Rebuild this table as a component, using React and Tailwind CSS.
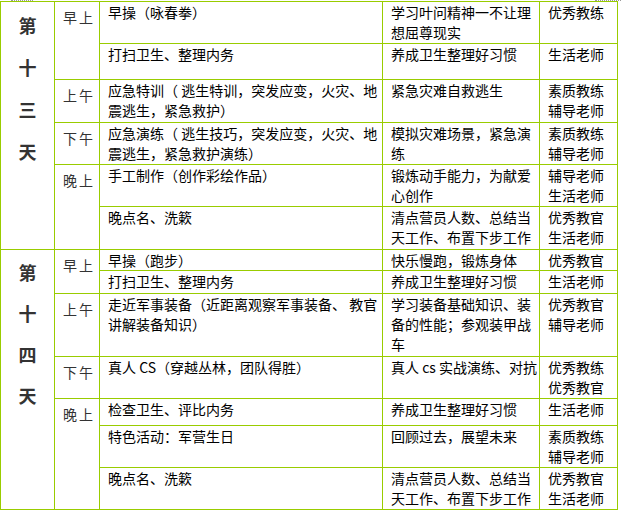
import React from 'react';

const day13 = [
  { c: ['早操（咏春拳）'], g: ['学习叶问精神一不让理', '想屈尊现实'], t: ['优秀教练'] },
  { c: ['打扫卫生、整理内务'], g: ['养成卫生整理好习惯'], t: ['生活老师'] },
  { c: ['应急特训（ 逃生特训，突发应变，火灾、地', '震逃生，紧急救护）'], g: ['紧急灾难自救逃生'], t: ['素质教练', '辅导老师'] },
  { c: ['应急演练（ 逃生技巧，突发应变，火灾、地', '震逃生，紧急救护演练）'], g: ['模拟灾难场景，紧急演', '练'], t: ['素质教练', '辅导老师'] },
  { c: ['手工制作（创作彩绘作品）'], g: ['锻炼动手能力，为献爱', '心创作'], t: ['辅导老师', '生活老师'] },
  { c: ['晚点名、洗簌'], g: ['清点营员人数、总结当', '天工作、布置下步工作'], t: ['优秀教官', '生活老师'] },
];

const day14 = [
  { c: ['早操（跑步）'], g: ['快乐慢跑，锻炼身体'], t: ['优秀教官'] },
  { c: ['打扫卫生、整理内务'], g: ['养成卫生整理好习惯'], t: ['生活老师'] },
  { c: ['走近军事装备（近距离观察军事装备、 教官', '讲解装备知识）'], g: ['学习装备基础知识、装', '备的性能；参观装甲战', '车'], t: ['优秀教官', '辅导老师'] },
  { c: ['真人 CS（穿越丛林，团队得胜）'], g: ['真人 cs 实战演练、对抗'], t: ['优秀教练', '优秀教官'] },
  { c: ['检查卫生、评比内务'], g: ['养成卫生整理好习惯'], t: ['生活老师'] },
  { c: ['特色活动：军营生日'], g: ['回顾过去，展望未来'], t: ['素质教练', '辅导老师'] },
  { c: ['晚点名、洗簌'], g: ['清点营员人数、总结当', '天工作、布置下步工作'], t: ['优秀教官', '生活老师'] },
];

function Lines({ lines }) {
  return lines.map((l, i) => (
    <div key={i} className="whitespace-nowrap">{l}</div>
  ));
}

function Day({ chars, span, extra }) {
  return (
    <div className={`bg-white flex flex-col items-center text-[18px] font-bold text-[#333] ${span} ${extra}`}>
      {chars.map((ch) => (
        <div key={ch}>{ch}</div>
      ))}
    </div>
  );
}

function Time({ label, span }) {
  return (
    <div className={`bg-white pt-[5px] pl-1 text-center text-[14px] leading-[20px] tracking-[2px] text-[#333] ${span}`}>
      {label}
    </div>
  );
}

function Rows({ rows }) {
  return rows.map((r, i) => (
    <React.Fragment key={i}>
      <div className="bg-white pl-2 text-[14px] leading-[20px] text-black col-start-3" style={{ gridRowStart: r.row }}>
        <Lines lines={r.c} />
      </div>
      <div className="bg-white pl-2 text-[14px] leading-[20px] text-black col-start-4" style={{ gridRowStart: r.row }}>
        <Lines lines={r.g} />
      </div>
      <div className="bg-white pl-2 text-[14px] leading-[20px] text-black col-start-5" style={{ gridRowStart: r.row }}>
        <Lines lines={r.t} />
      </div>
    </React.Fragment>
  ));
}

export default function App() {
  const rows13 = day13.map((r, i) => ({ ...r, row: i + 1 }));
  const rows14 = day14.map((r, i) => ({ ...r, row: i + 7 }));
  return (
    <div className="w-[621px] h-[512px] bg-white font-['Noto_Sans_CJK_SC','Liberation_Sans',sans-serif] overflow-hidden">
      {/* cut-off marks from the page above */}
      <div className="flex h-px">
        <div className="ml-[11px] w-[22px] border-t border-dotted border-[#999]"></div>
        <div className="ml-auto w-[26px] border-t border-dotted border-[#999]"></div>
      </div>
      <div className="grid w-[618px] bg-[#99cc00] gap-px p-px grid-cols-[53px_44px_282px_156px_77px] grid-rows-[41px_35px_42px_41px_41px_42px_20px_22px_62px_41px_26px_41px_41px]">
        <Day chars={['第', '十', '三', '天']} span="col-start-1 row-start-1 row-span-6" extra="leading-[42px] pt-[2px]" />
        <Time label="早上" span="col-start-2 row-start-1 row-span-2" />
        <Time label="上午" span="col-start-2 row-start-3" />
        <Time label="下午" span="col-start-2 row-start-4" />
        <Time label="晚上" span="col-start-2 row-start-5 row-span-2" />
        <Rows rows={rows13} />

        <Day chars={['第', '十', '四', '天']} span="col-start-1 row-start-7 row-span-7" extra="leading-[41px] pt-[2px]" />
        <Time label="早上" span="col-start-2 row-start-7 row-span-2" />
        <Time label="上午" span="col-start-2 row-start-9" />
        <Time label="下午" span="col-start-2 row-start-10" />
        <Time label="晚上" span="col-start-2 row-start-11 row-span-3" />
        <Rows rows={rows14} />
      </div>
    </div>
  );
}
